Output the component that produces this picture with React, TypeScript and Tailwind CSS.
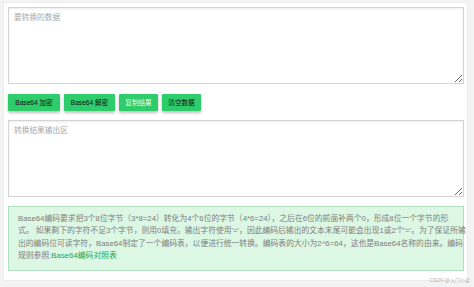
import React from "react";

export default function App() {
  return (
    <div className="relative w-[474px] h-[287px] bg-[#f3f3f3] overflow-hidden pl-[3px] pt-[2px] font-['Liberation_Sans','Noto_Sans_CJK_SC',sans-serif]">
      <div className="flex flex-col w-[465px] h-[279px] bg-white border border-[#ececec] pl-[4px] pt-[4px]">
        <textarea
          placeholder="要转换的数据"
          className="block w-[456px] h-[77px] border border-[#d4d4d4] shadow-[inset_0_1px_2px_rgba(0,0,0,0.08)] px-[5px] py-[5px] text-[7.7px] leading-[10px] placeholder:text-[#a9a9a9] outline-none font-['Liberation_Sans','Noto_Sans_CJK_SC',sans-serif]"
        />
        <div className="flex gap-[4px] mt-[10px] h-[17px] text-[6.6px] font-['Liberation_Sans','Noto_Sans_CJK_SC',sans-serif]">
          <button className="w-[52px] h-[17px] bg-[#2ecc6a] text-[#111] rounded-[1px] shadow-[0_2px_3px_rgba(0,0,0,0.25)] flex items-center justify-center">Base64 加密</button>
          <button className="w-[51px] h-[17px] bg-[#2ecc6a] text-[#111] rounded-[1px] shadow-[0_2px_3px_rgba(0,0,0,0.25)] flex items-center justify-center">Base64 解密</button>
          <button className="w-[39px] h-[17px] bg-[#2ecc6a] text-[#e9fbef] rounded-[1px] shadow-[0_2px_3px_rgba(0,0,0,0.25)] flex items-center justify-center">复制结果</button>
          <button className="w-[39px] h-[17px] bg-[#2ecc6a] text-[#111] rounded-[1px] shadow-[0_2px_3px_rgba(0,0,0,0.25)] flex items-center justify-center">清空数据</button>
        </div>
        <textarea
          placeholder="转换结果输出区"
          className="block mt-[9px] w-[456px] h-[77px] border border-[#d4d4d4] shadow-[inset_0_1px_2px_rgba(0,0,0,0.08)] px-[5px] py-[5px] text-[7.7px] leading-[10px] placeholder:text-[#a9a9a9] outline-none font-['Liberation_Sans','Noto_Sans_CJK_SC',sans-serif]"
        />
        <div className="mt-[9px] w-[456px] h-[65px] bg-[#dcf7e3] border border-[#b0e0bf] pl-[9px] pt-[6px] text-[7.8px] leading-[12.4px] text-[#7f7f7f] whitespace-nowrap">
          <div>Base64编码要求把3个8位字节（3*8=24）转化为4个6位的字节（4*6=24），之后在6位的前面补两个0，形成8位一个字节的形</div>
          <div>式。 如果剩下的字符不足3个字节，则用0填充，输出字符使用'='，因此编码后输出的文本末尾可能会出现1或2个'='。为了保证所输</div>
          <div>出的编码位可读字符，Base64制定了一个编码表，以便进行统一转换。编码表的大小为2^6=64，这也是Base64名称的由来。编码</div>
          <div>规则参照:<span className="text-[#27a650]">Base64编码对照表</span></div>
        </div>
      </div>
      <div className="absolute right-[4px] top-[277px] text-[5px] leading-[6px] text-[#b8b8b8]">CSDN @入门小菜</div>
    </div>
  );
}
